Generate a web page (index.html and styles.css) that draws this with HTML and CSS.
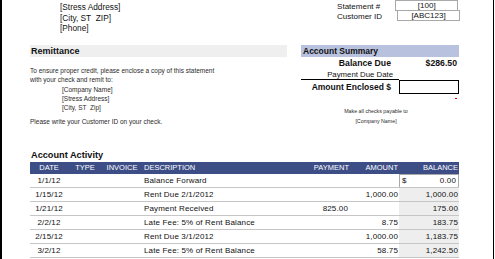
FILE: index.html
```html
<!DOCTYPE html>
<html>
<head>
<meta charset="utf-8">
<link rel="stylesheet" href="styles.css">
</head>
<body>
<div class="sheet">
  <div class="top">
    <div class="addr">
      <div>[Stress Address]</div>
      <div>[City, ST&nbsp;&nbsp;ZIP]</div>
      <div>[Phone]</div>
    </div>
    <div class="ids">
      <div class="id-row"><span class="id-label">Statement #</span><span class="id-val">[100]</span></div>
      <div class="id-row second"><span class="id-label">Customer ID</span><span class="id-val">[ABC123]</span></div>
    </div>
  </div>

  <div class="mid">
    <div class="remit">
      <div class="bar gray">Remittance</div>
      <p class="small first">To ensure proper credit, please enclose a copy of this statement<br>with your check and remit to:</p>
      <div class="small indent">[Company Name]<br>[Stress Address]<br>[City, ST&nbsp;&nbsp;Zip]</div>
      <p class="small last">Please write your Customer ID on your check.</p>
    </div>
    <div class="summary">
      <div class="bar blue">Account Summary</div>
      <div class="sum-row r1"><span class="sum-label strong">Balance Due</span><span class="sum-val strong">$286.50</span></div>
      <div class="sum-row r2"><span class="sum-label due">Payment Due Date</span><span class="sum-val"></span></div>
      <div class="sum-row r3"><span class="sum-label strong big">Amount Enclosed $</span><span class="sum-val box"></span></div>
      <div class="mark-row"><span class="dot"></span></div>
      <div class="payable">Make all checks payable to<br>[Company Name]</div>
    </div>
  </div>

  <h2 class="act-title">Account Activity</h2>
  <table class="activity">
    <colgroup>
      <col class="c-date"><col class="c-type"><col class="c-inv"><col class="c-desc"><col class="c-pay"><col class="c-amt"><col class="c-bal">
    </colgroup>
    <thead>
      <tr>
        <th class="ctr">DATE</th><th class="ctr">TYPE</th><th class="ctr">INVOICE</th><th class="lft">DESCRIPTION</th><th class="rgt">PAYMENT</th><th class="rgt">AMOUNT</th><th class="rgt bal-h">BALANCE</th>
      </tr>
    </thead>
    <tbody>
      <tr><td class="ctr">1/1/12</td><td></td><td></td><td class="lft">Balance Forward</td><td class="rgt pay"></td><td class="rgt"></td><td class="bal first-bal"><div class="bal-box"><span>$</span><span>0.00</span></div></td></tr>
      <tr><td class="ctr">1/15/12</td><td></td><td></td><td class="lft">Rent Due 2/1/2012</td><td class="rgt pay"></td><td class="rgt">1,000.00</td><td class="rgt bal">1,000.00</td></tr>
      <tr><td class="ctr">1/21/12</td><td></td><td></td><td class="lft">Payment Received</td><td class="rgt pay">825.00</td><td class="rgt"></td><td class="rgt bal">175.00</td></tr>
      <tr><td class="ctr">2/2/12</td><td></td><td></td><td class="lft">Late Fee: 5% of Rent Balance</td><td class="rgt pay"></td><td class="rgt">8.75</td><td class="rgt bal">183.75</td></tr>
      <tr><td class="ctr">2/15/12</td><td></td><td></td><td class="lft">Rent Due 3/1/2012</td><td class="rgt pay"></td><td class="rgt">1,000.00</td><td class="rgt bal">1,183.75</td></tr>
      <tr><td class="ctr">3/2/12</td><td></td><td></td><td class="lft">Late Fee: 5% of Rent Balance</td><td class="rgt pay"></td><td class="rgt">58.75</td><td class="rgt bal">1,242.50</td></tr>
    </tbody>
  </table>
</div>
</body>
</html>
```

FILE: styles.css
```css
html, body {
  margin: 0;
  padding: 0;
  background: #fff;
}
body {
  font-family: "Liberation Sans", Arial, sans-serif;
  color: #111;
  width: 495px;
  height: 259px;
  overflow: hidden;
}
.sheet {
  box-sizing: border-box;
  width: 494px;
  height: 259px;
  border-left: 2px solid #000;
  border-right: 1px solid #000;
  overflow: hidden;
}

/* top */
.top {
  display: flex;
  height: 45px;
}
.addr {
  margin-left: 58px;
  padding-top: 2px;
  font-size: 8.3px;
  line-height: 10.5px;
}
.ids {
  margin-left: auto;
  margin-right: 33px;
  font-size: 8px;
}
.id-row {
  display: flex;
  height: 11px;
  align-items: stretch;
}
.id-row.second {
  margin-top: -1px;
}
.id-label {
  padding-right: 15px;
  line-height: 13px;
  text-align: right;
}
.id-val {
  box-sizing: border-box;
  width: 63px;
  border: 1px solid #a9a9a9;
  text-align: center;
  line-height: 10px;
}

/* middle */
.mid {
  display: grid;
  grid-template-columns: 257px 158px;
  column-gap: 14px;
  padding-left: 28px;
  align-items: start;
}
.bar {
  height: 12px;
  line-height: 13px;
  font-weight: bold;
  font-size: 9px;
}
.bar.gray {
  background: #efefef;
  padding-left: 1px;
}
.bar.blue {
  background: #b8c2df;
  padding-left: 2px;
  font-size: 8.5px;
}
.small {
  font-size: 6.5px;
  line-height: 9.3px;
  color: #2a2a2a;
  margin: 0;
}
.small.first {
  margin-top: 9px;
}
.indent {
  padding-left: 32px;
}
.small.last {
  margin-top: 5px;
}

.sum-row {
  display: flex;
}
.sum-label {
  box-sizing: border-box;
  width: 98px;
  text-align: right;
  padding-right: 8px;
}
.sum-val {
  box-sizing: border-box;
  width: 60px;
  text-align: right;
  padding-right: 2px;
}
.strong {
  font-weight: bold;
  font-size: 8.7px;
}
.strong.big {
  font-size: 8.5px;
}
.r1 {
  height: 12px;
  line-height: 12px;
}
.r2 {
  height: 11px;
  line-height: 11px;
}
.r2 .sum-label {
  border-bottom: 1px solid #000;
  padding-right: 6px;
}
.due {
  font-size: 7.8px;
}
.r3 {
  height: 14px;
  line-height: 14px;
}
.box {
  border: 1px solid #000;
}
.mark-row {
  height: 8px;
  display: flex;
  justify-content: flex-end;
  padding-right: 2px;
}
.dot {
  width: 2px;
  height: 1px;
  margin-top: 4px;
  background: #d00;
}
.payable {
  margin-top: 4px;
  padding-right: 8px;
  text-align: center;
  font-size: 5.3px;
  line-height: 10px;
  color: #2a2a2a;
}

/* activity */
.act-title {
  margin: 23px 0 1px 29px;
  font-size: 9.2px;
  line-height: 11px;
  height: 11px;
  font-weight: bold;
}
.activity {
  margin-left: 28px;
  width: 429px;
  table-layout: fixed;
  border-collapse: separate;
  border-spacing: 0;
}
.c-date { width: 38px; }
.c-type { width: 34px; }
.c-inv { width: 40px; }
.c-desc { width: 158px; }
.c-pay { width: 50px; }
.c-amt { width: 49px; }
.c-bal { width: 60px; }

.activity th {
  background: #3d4e86;
  color: #fff;
  font-weight: normal;
  font-size: 7.5px;
  height: 12px;
  line-height: 12px;
  padding: 0 1px;
  white-space: nowrap;
  overflow: hidden;
}
.activity td {
  font-size: 8px;
  letter-spacing: 0.15px;
  height: 13px;
  line-height: 13px;
  padding: 0 1px;
  border-bottom: 1px solid #c6c6c6;
  white-space: nowrap;
  overflow: hidden;
}
.activity .ctr { text-align: center; }
.activity .lft { text-align: left; padding-left: 2px; }
.activity .rgt { text-align: right; }
.activity .pay { padding-right: 2px; }
.activity td.bal {
  background: #eeeeee;
}
.activity td.first-bal {
  background: #fff;
  padding: 0;
}
.bal-box {
  box-sizing: border-box;
  height: 13px;
  border: 1px solid #a9a9a9;
  border-bottom: none;
  display: flex;
  justify-content: space-between;
  padding: 0 2px 0 2px;
  line-height: 12px;
}
```
